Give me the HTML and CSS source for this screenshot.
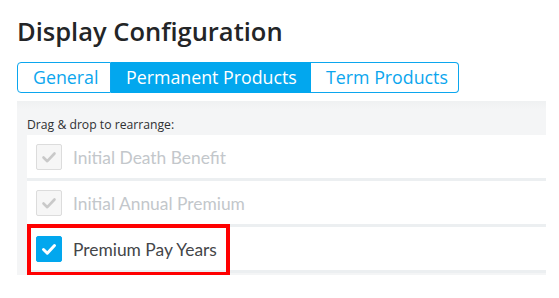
FILE: index.html
```html
<!DOCTYPE html>
<html>
<head>
<meta charset="utf-8">
<link rel="stylesheet" href="styles.css">
</head>
<body>
<div class="page">
  <h1 class="title">Display Configuration</h1>
  <div class="tabs">
    <div class="tab">General</div>
    <div class="tab active">Permanent Products</div>
    <div class="tab">Term Products</div>
  </div>
  <div class="panel">
    <div class="hint">Drag &amp; drop to rearrange:</div>
    <div class="row disabled">
      <span class="check"><svg viewBox="0 0 26 26" width="26" height="26"><path d="M7.5 13.5 L11.3 17.2 L18.5 9.5" fill="none" stroke="currentColor" stroke-width="2.6" stroke-linecap="round" stroke-linejoin="round"/></svg></span>
      <span class="label">Initial Death Benefit</span>
    </div>
    <div class="row disabled">
      <span class="check"><svg viewBox="0 0 26 26" width="26" height="26"><path d="M7.5 13.5 L11.3 17.2 L18.5 9.5" fill="none" stroke="currentColor" stroke-width="2.6" stroke-linecap="round" stroke-linejoin="round"/></svg></span>
      <span class="label">Initial Annual Premium</span>
    </div>
    <div class="row highlighted">
      <span class="check on"><svg viewBox="0 0 26 26" width="26" height="26"><path d="M7.5 13.5 L11.3 17.2 L18.5 9.5" fill="none" stroke="currentColor" stroke-width="3" stroke-linecap="round" stroke-linejoin="round"/></svg></span>
      <span class="label">Premium Pay Years</span>
      <span class="redbox"></span>
    </div>
  </div>
</div>
</body>
</html>
```

FILE: styles.css
```css
html, body {
  margin: 0;
  padding: 0;
  background: #ffffff;
}
body {
  font-family: Lato, "Noto Sans", sans-serif;
  color: #333;
}
.page {
  padding: 15px 13px 0 17px;
}
.title {
  margin: 0;
  font-family: "Open Sans", Lato, sans-serif;
  font-size: 25.5px;
  line-height: 32px;
  font-weight: 600;
  color: #232527;
}
.tabs {
  display: flex;
  margin-top: 15px;
}
.tab {
  height: 29px;
  line-height: 29px;
  border: 1px solid #0ba6ee;
  color: #0ba6ee;
  font-family: "Open Sans", Lato, sans-serif;
  font-size: 17.8px;
  padding: 0 15px;
  background: #fff;
  white-space: nowrap;
}
.tab:first-child {
  border-radius: 4px 0 0 4px;
  width: 62px;
}
.tab:nth-child(2) {
  width: 169px;
  border-left: 0;
}
.tab:last-child {
  border-radius: 0 4px 4px 0;
  width: 117px;
  border-left: 0;
}
.tab.active {
  background: #02a7ee;
  color: #fff;
  border-color: #02a7ee;
}
.panel {
  margin-top: 8px;
  background: #f4f5f6;
  padding: 0 0 2px 10px;
}
.hint {
  height: 34px;
  box-sizing: border-box;
  padding-top: 16px;
  font-family: "Open Sans", Lato, sans-serif;
  font-size: 12.2px;
  line-height: 15px;
  color: #2f3133;
  background: linear-gradient(#eff1f2, #f4f5f6 8px);
  margin-left: -10px;
  padding-left: 10px;
}
.row {
  position: relative;
  display: flex;
  align-items: center;
  height: 43px;
  background: #fff;
  border-bottom: 3px solid #eceff1;
  padding-left: 9px;
}
.row:first-of-type {
  height: 44px;
}
.check {
  width: 24px;
  height: 24px;
  border: 1px solid #dcdcdc;
  border-radius: 2px;
  background: #f6f6f6;
  color: #c9c9c9;
  display: flex;
  align-items: center;
  justify-content: center;
  overflow: hidden;
}
.check svg {
  flex: none;
}
.check.on {
  background: #02a7ee;
  border-color: #02a7ee;
  color: #fff;
}
.label {
  margin-left: 11px;
  padding-top: 2px;
  font-size: 17.4px;
  color: #444649;
}
.disabled .label {
  color: #c3c7cb;
}
.redbox {
  position: absolute;
  left: 0;
  top: -3px;
  width: 195px;
  height: 44px;
  border: 4px solid #ff0000;
}
```
